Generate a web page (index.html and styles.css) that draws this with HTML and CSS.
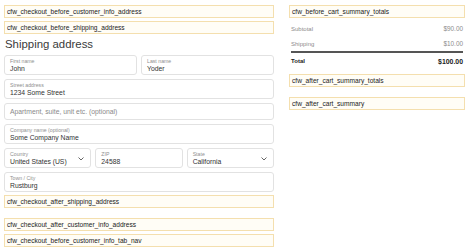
FILE: index.html
```html
<!DOCTYPE html>
<html lang="en">
<head>
    <meta charset="UTF-8">
    <title>Checkout Hooks</title>
    <link rel="stylesheet" href="styles.css">
</head>
<body>
    <div class="checkout">
        <div class="customer-col">
            <div class="hook">cfw_checkout_before_customer_info_address</div>
            <div class="hook">cfw_checkout_before_shipping_address</div>
            <h2 class="section-title">Shipping address</h2>

            <div class="field-row">
                <div class="field">
                    <span class="field-label">First name</span>
                    <span class="field-value">John</span>
                </div>
                <div class="field">
                    <span class="field-label">Last name</span>
                    <span class="field-value">Yoder</span>
                </div>
            </div>
            <div class="field">
                <span class="field-label">Street address</span>
                <span class="field-value">1234 Some Street</span>
            </div>
            <div class="field field-empty">
                <span class="field-placeholder">Apartment, suite, unit etc. (optional)</span>
            </div>
            <div class="field">
                <span class="field-label">Company name (optional)</span>
                <span class="field-value">Some Company Name</span>
            </div>
            <div class="field-row thirds">
                <div class="field select">
                    <span class="field-label">Country</span>
                    <span class="field-value">United States (US)</span>
                    <svg class="chevron" width="6" height="4" viewBox="0 0 6 4"><path d="M0.5 0.5 L3 3 L5.5 0.5" fill="none" stroke="#555" stroke-width="0.9"/></svg>
                </div>
                <div class="field">
                    <span class="field-label">ZIP</span>
                    <span class="field-value">24588</span>
                </div>
                <div class="field select">
                    <span class="field-label">State</span>
                    <span class="field-value">California</span>
                    <svg class="chevron" width="6" height="4" viewBox="0 0 6 4"><path d="M0.5 0.5 L3 3 L5.5 0.5" fill="none" stroke="#555" stroke-width="0.9"/></svg>
                </div>
            </div>
            <div class="field">
                <span class="field-label">Town / City</span>
                <span class="field-value">Rustburg</span>
            </div>

            <div class="hook after-fields">cfw_checkout_after_shipping_address</div>
            <div class="hook hook-spaced">cfw_checkout_after_customer_info_address</div>
            <div class="hook">cfw_checkout_before_customer_info_tab_nav</div>
        </div>

        <div class="summary-col">
            <div class="hook">cfw_before_cart_summary_totals</div>
            <div class="totals">
                <div class="totals-row">
                    <span>Subtotal</span>
                    <span class="amount">$90.00</span>
                </div>
                <div class="totals-row">
                    <span>Shipping</span>
                    <span class="amount">$10.00</span>
                </div>
                <div class="totals-row grand">
                    <span>Total</span>
                    <span class="amount">$100.00</span>
                </div>
            </div>
            <div class="hook">cfw_after_cart_summary_totals</div>
            <div class="hook hook-spaced">cfw_after_cart_summary</div>
        </div>
    </div>
</body>
</html>
```

FILE: styles.css
```css
/* Base */
* {
    margin: 0;
    padding: 0;
    box-sizing: border-box;
}

body {
    font-family: 'Liberation Sans', Arial, sans-serif;
    background: #fff;
    color: #333;
}

/* Two columns */
.checkout {
    display: grid;
    grid-template-columns: 270px 176px;
    column-gap: 15px;
    padding: 5px 4px;
}

.customer-col,
.summary-col {
    display: flex;
    flex-direction: column;
}

/* Hook placeholders */
.hook {
    height: 13px;
    border: 1px solid #f4dfae;
    background: #fffdf6;
    color: #222;
    font-size: 6.6px;
    line-height: 11px;
    padding-left: 2px;
    margin-bottom: 3px;
    white-space: nowrap;
}

.hook.after-fields {
    margin-top: -1px;
}

.hook-spaced {
    margin-top: 7px;
}

.section-title {
    font-size: 11.4px;
    font-weight: normal;
    color: #3a3a3a;
    line-height: 14px;
    margin: 0 0 4px 1px;
}

/* Fields */
.field-row {
    display: grid;
    grid-template-columns: 1fr 1fr;
    gap: 4px;
}

.field-row.thirds {
    grid-template-columns: 1fr 1fr 1fr;
}

.field {
    position: relative;
    height: 20px;
    border: 1px solid #e2e2e2;
    border-radius: 3px;
    padding: 2px 5px 0;
    margin-bottom: 4px;
    display: flex;
    flex-direction: column;
}

.field-label {
    font-size: 5.2px;
    line-height: 6px;
    color: #8f8f8f;
}

.field-value {
    font-size: 6.8px;
    line-height: 9px;
    color: #333;
    white-space: nowrap;
}

.field-empty {
    height: 17px;
    justify-content: center;
    padding-top: 0;
}

.field-placeholder {
    font-size: 6.8px;
    color: #8a8a8a;
}

.chevron {
    position: absolute;
    right: 6px;
    top: 8px;
}

/* Totals */
.totals {
    padding: 0 2px;
    margin-bottom: 5px;
}

.totals-row {
    display: flex;
    justify-content: space-between;
    align-items: center;
    height: 15px;
    font-size: 6px;
    color: #8c8c8c;
}

.totals-row .amount {
    font-size: 6.4px;
}

.totals-row.grand {
    border-top: 2px solid #555;
    height: 18px;
    color: #222;
    font-weight: bold;
}

.totals-row.grand .amount {
    font-size: 6.9px;
}
```
